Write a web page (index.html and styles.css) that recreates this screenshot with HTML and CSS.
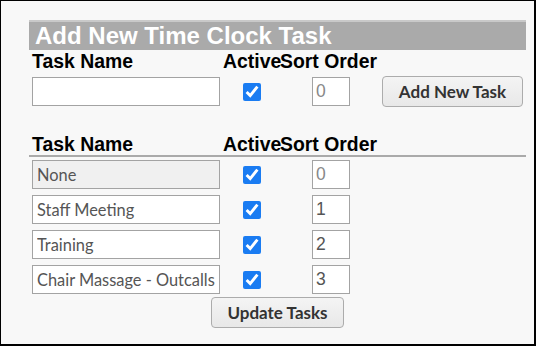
FILE: index.html
```html
<!DOCTYPE html>
<html>
<head>
<meta charset="utf-8">
<link rel="stylesheet" href="styles.css">
</head>
<body>
<div class="page">
  <div class="panel">
    <div class="bar">Add New Time Clock Task</div>
    <div class="grid head">
      <div class="c1">Task Name</div>
      <div class="c2">Active</div>
      <div class="c3">Sort Order</div>
    </div>
    <div class="grid row add-row">
      <div class="c1"><input class="name" type="text" value=""></div>
      <div class="c2 chk"><input type="checkbox" checked></div>
      <div class="c3"><input class="sort" type="text" value="0"></div>
      <div class="c4"><button class="btn add">Add New Task</button></div>
    </div>
    <div class="grid head head2">
      <div class="c1">Task Name</div>
      <div class="c2">Active</div>
      <div class="c3">Sort Order</div>
    </div>
    <div class="list">
      <div class="grid row">
        <div class="c1"><input class="name ro" type="text" value="None" readonly></div>
        <div class="c2 chk"><input type="checkbox" checked></div>
        <div class="c3"><input class="sort" type="text" value="0"></div>
      </div>
      <div class="grid row">
        <div class="c1"><input class="name" type="text" value="Staff Meeting"></div>
        <div class="c2 chk"><input type="checkbox" checked></div>
        <div class="c3"><input class="sort dark" type="text" value="1"></div>
      </div>
      <div class="grid row">
        <div class="c1"><input class="name" type="text" value="Training"></div>
        <div class="c2 chk"><input type="checkbox" checked></div>
        <div class="c3"><input class="sort dark" type="text" value="2"></div>
      </div>
      <div class="grid row">
        <div class="c1"><input class="name" type="text" value="Chair Massage - Outcalls"></div>
        <div class="c2 chk"><input type="checkbox" checked></div>
        <div class="c3"><input class="sort dark" type="text" value="3"></div>
      </div>
    </div>
    <div class="actions"><button class="btn update">Update Tasks</button></div>
  </div>
</div>
</body>
</html>
```
FILE: styles.css
```css
html, body {
  margin: 0;
  padding: 0;
  background: #f8f8f8;
}
.page {
  box-sizing: border-box;
  width: 536px;
  height: 346px;
  border-top: 1px solid #000;
  border-left: 1px solid #000;
  border-right: 2px solid #000;
  border-bottom: 2px solid #000;
  background: #f8f8f8;
  padding: 19px 0 0 28px;
}
.panel {
  width: 497px;
}
.bar {
  box-sizing: border-box;
  height: 30px;
  background: #aaaaaa;
  border-top: 2px solid #c9c9c9;
  color: #fff;
  font-family: "Liberation Sans", Arial, sans-serif;
  font-weight: bold;
  font-size: 24px;
  line-height: 28px;
  padding-left: 6px;
  white-space: nowrap;
}
.grid {
  display: grid;
  grid-template-columns: 194px 57px 98px 1fr;
  align-items: center;
}
.head {
  font-family: "Liberation Sans", Arial, sans-serif;
  font-weight: bold;
  font-size: 19.4px;
  line-height: 22px;
  height: 22px;
  color: #000;
  white-space: nowrap;
}
.head .c1 {
  padding-left: 3px;
}
.add-row {
  margin-top: 4px;
  height: 31px;
}
.head2 {
  margin-top: 25px;
  height: 23px;
  border-bottom: 2px solid #aaaaaa;
}
.list {
  margin-top: 3px;
  display: flex;
  flex-direction: column;
  gap: 6px;
}
.list .row {
  height: 29px;
}
.c1 {
  padding-left: 3px;
  display: flex;
}
.chk {
  display: flex;
  justify-content: center;
}
.chk input {
  width: 18px;
  height: 18px;
  margin: 0;
  accent-color: #1a7cf2;
}
input.name, input.sort {
  box-sizing: border-box;
  height: 29px;
  margin: 0;
  border: 1px solid #a3a3a3;
  border-radius: 0;
  background: #fff;
  outline: none;
}
input.name {
  width: 188px;
  padding: 0 0 0 4px;
  font-family: Lato, "Liberation Sans", sans-serif;
  font-size: 16.4px;
  color: #555;
}
input.name.ro {
  background: #f0f0f0;
}
input.sort {
  width: 38px;
  margin-left: 32px;
  padding: 0 0 0 3px;
  font-family: "Liberation Sans", Arial, sans-serif;
  font-size: 17.5px;
  color: #888;
}
input.sort.dark {
  color: #555;
}
.btn {
  box-sizing: border-box;
  height: 31px;
  margin: 0;
  border: 1px solid #acacac;
  border-radius: 4px;
  background: linear-gradient(#f4f4f4, #e8e8e8);
  color: #333;
  font-family: Lato, "Liberation Sans", sans-serif;
  font-weight: bold;
  font-size: 17px;
  padding: 0;
  white-space: nowrap;
}
.btn.add {
  width: 141px;
  margin-left: 4px;
}
.actions {
  margin-top: 3px;
  display: flex;
  justify-content: center;
}
.btn.update {
  width: 133px;
}
```
